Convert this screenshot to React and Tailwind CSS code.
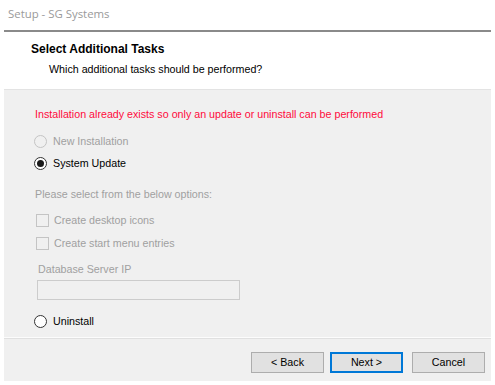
const Radio = ({ checked, disabled, label }) => (
  <div className="flex items-center h-[22px]">
    <span
      className={`w-[13px] h-[13px] rounded-full border flex items-center justify-center ${
        disabled ? 'border-[#c4c4c4] bg-[#f0f0f0]' : 'border-[#333] bg-white'
      }`}
    >
      {checked && <span className="w-[7px] h-[7px] rounded-full bg-[#1a1a1a]" />}
    </span>
    <span className={`ml-[6px] ${disabled ? 'text-[#a0a0a0]' : 'text-black'}`}>{label}</span>
  </div>
);

const Check = ({ label }) => (
  <div className="flex items-center h-[23px] pl-[2px]">
    <span className="w-[13px] h-[13px] border border-[#c4c4c4] bg-[#f0f0f0]" />
    <span className="ml-[5px] text-[#a0a0a0]">{label}</span>
  </div>
);

const Button = ({ children, focused }) => (
  <button
    type="button"
    className={`w-[73px] h-[21px] bg-[#e1e1e1] text-black text-[10.7px] leading-none ${
      focused ? 'border-2 border-[#0078d7]' : 'border border-[#adadad]'
    }`}
  >
    {children}
  </button>
);

export default function App() {
  return (
    <div className="w-[495px] h-[385px] bg-white font-['Liberation_Sans',Arial,sans-serif] text-[10.7px] overflow-hidden">
      <div className="h-[32px] flex items-start px-[4px]">
        <div className="flex-1 h-[32px] border-b-2 border-[#8a8a8a] flex items-center pl-[4px] pb-[3px]">
          <span className="text-[#9a9a9a] text-[11.4px] font-['Open_Sans',sans-serif]">Setup - SG Systems</span>
        </div>
      </div>
      <div className="mx-[4px] flex flex-col h-[349px]">
        <div className="h-[58px] bg-white border-b border-[#e3e3e3] pl-[27px] pt-[10px]">
          <div className="font-bold text-[12px] text-black leading-[15px]">Select Additional Tasks</div>
          <div className="pl-[18px] mt-[5px] text-black leading-[15px]">Which additional tasks should be performed?</div>
        </div>
        <div className="h-[248px] bg-[#f0f0f0] border-b border-[#fcfcfc] pl-[30px] pt-[17px]">
          <div className="text-[#ff0a3c] leading-[15px] pl-[1px]">
            Installation already exists so only an update or uninstall can be performed
          </div>
          <div className="mt-[8px]">
            <Radio disabled label="New Installation" />
            <Radio checked label="System Update" />
          </div>
          <div className="mt-[13px] text-[#a0a0a0] leading-[15px] pl-[1px]">Please select from the below options:</div>
          <div className="mt-[7px]">
            <Check label="Create desktop icons" />
            <Check label="Create start menu entries" />
          </div>
          <div className="mt-[7px] pl-[4px] text-[#a0a0a0] leading-[15px]">Database Server IP</div>
          <div className="mt-[3px] ml-[3px] w-[203px] h-[20px] border border-[#cccccc] bg-[#f0f0f0]" />
          <div className="mt-[10px]">
            <Radio label="Uninstall" />
          </div>
        </div>
        <div className="flex-1 bg-[#f0f0f0] border-t border-[#e0e0e0] flex justify-end items-start pt-[13px] pr-[6px]">
          <Button>&lt; Back</Button>
          <div className="ml-[6px]">
            <Button focused>Next &gt;</Button>
          </div>
          <div className="ml-[9px]">
            <Button>Cancel</Button>
          </div>
        </div>
      </div>
    </div>
  );
}
